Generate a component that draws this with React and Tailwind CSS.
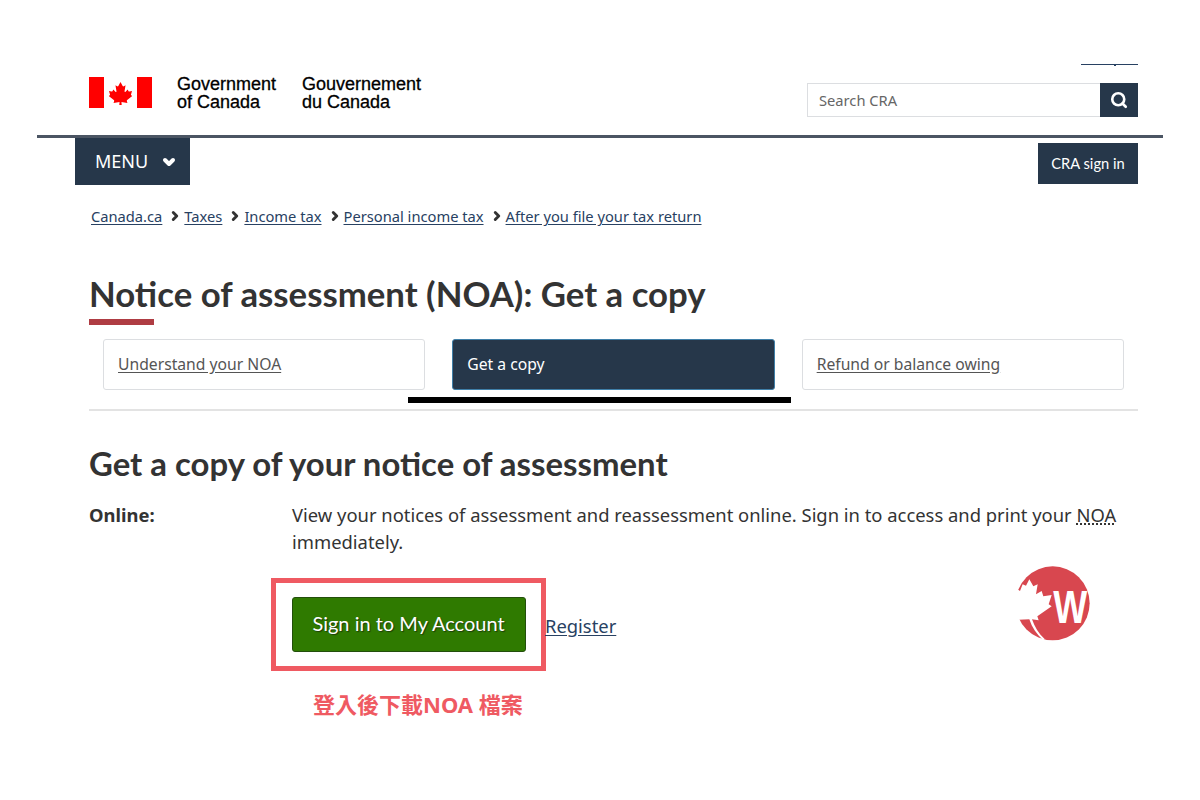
import React from 'react';
import { ChevronDown, ChevronRight, Search } from 'lucide-react';

const MAPLE = 'M50 4 L59 21 C60 23 62 23 64 22 L71 18 L67 42 C66 46 69 47 71 45 L80 35 L83 42 C84 44 85 44 87 44 L98 42 L94 55 C93 58 94 59 96 60 L99 62 L78 79 C76 81 76 82 77 85 L79 92 L54 88 L55 100 L45 100 L46 88 L21 92 L23 85 C24 82 24 81 22 79 L1 62 L4 60 C6 59 7 58 6 55 L2 42 L13 44 C15 44 16 44 17 42 L20 35 L29 45 C31 47 34 46 33 42 L29 18 L36 22 C38 23 40 23 41 21 Z';

const crumbs = ['Taxes', 'Income tax', 'Personal income tax', 'After you file your tax return'];

const Flag = () => (
  <svg width="64" height="31" viewBox="0 0 64 31" className="block">
    <rect x="0" y="0" width="15" height="31" fill="#ff0000" />
    <rect x="48" y="0" width="15" height="31" fill="#ff0000" />
    <svg x="19.5" y="4" width="24" height="24" viewBox="0 0 100 100">
      <path d={MAPLE} fill="#ff0000" />
    </svg>
  </svg>
);

const CwLogo = () => (
  <svg width="110" height="100" viewBox="0 0 330 300" className="block">
    <circle cx="158" cy="157" r="111" fill="#d8474f" />
    <path
      d="M88 85 L100 106 L113 100 L108 130 L125 120 L130 136 L155 132 L146 160 L155 166 L112 196 L116 208 L96 205 C104 228 116 248 134 264 L128 266 C110 250 96 230 88 205 L56 206 L30 206 L30 100 L60 120 L68 100 L78 104 Z"
      fill="#ffffff"
    />
    <text x="160" y="215" fontFamily="Liberation Sans, sans-serif" fontWeight="700" fontSize="140" fill="#ffffff" textLength="102" lengthAdjust="spacingAndGlyphs">W</text>
  </svg>
);

const Tab = ({ label, active }) => (
  active ? (
    <div className="flex-1 h-[51px] flex items-center px-[14px] pt-[1px] rounded-[3px] bg-[#26374a] border border-[#3f7fa8] text-white text-[15.7px]">
      {label}
    </div>
  ) : (
    <div className="flex-1 h-[51px] flex items-center px-[14px] pt-[1px] rounded-[3px] bg-white border border-[#dcdee1] text-[#555] text-[15.7px] underline underline-offset-2">
      {label}
    </div>
  )
);

export default function App() {
  return (
    <div className="w-[1200px] h-[800px] bg-white overflow-hidden px-[37px] pt-[60px] font-['Noto_Sans',sans-serif] text-[#333]">
      <header className="h-[75px] pl-[52px] pr-[25px] flex justify-between">
        <div className="flex items-start pt-[17px]">
          <Flag />
          <div className="ml-[24px] mt-[-2px] font-['Liberation_Sans',sans-serif] text-[18px] leading-[18px] text-black [-webkit-text-stroke:0.3px_black] w-[125px]">
            <div>Government</div>
            <div>of Canada</div>
          </div>
          <div className="mt-[-2px] font-['Liberation_Sans',sans-serif] text-[18px] leading-[18px] text-black [-webkit-text-stroke:0.3px_black]">
            <div>Gouvernement</div>
            <div>du Canada</div>
          </div>
        </div>
        <div className="flex flex-col items-end">
          {/* language link, only its underline survives in the screenshot */}
          <div className="relative mt-[4px] w-[57px] h-[1px] bg-[#284162]">
            <div className="absolute left-[33px] top-[1px] w-[2px] h-[1px] bg-[#284162]" />
          </div>
          <div className="mt-[18px] flex w-[331px] h-[34px]">
            <div className="flex-1 flex items-center px-[11px] border border-[#dcdee1] border-r-0 text-[#666] text-[14.7px]">Search CRA</div>
            <div className="w-[38px] bg-[#26374a] flex items-center justify-center">
              <Search size={18} strokeWidth={3.5} color="#fff" />
            </div>
          </div>
        </div>
      </header>

      <div className="h-[3px] bg-[#4b5563]" />

      <div className="flex justify-between pl-[38px] pr-[25px]">
        <div className="w-[115px] h-[47px] bg-[#26374a] text-white text-[18px] flex items-center pl-[20px]">
          MENU
          <ChevronDown size={16} strokeWidth={6} className="ml-[13px]" />
        </div>
        <div className="mt-[5px] w-[100px] h-[41px] bg-[#26374a] text-white text-[14.7px] flex items-center justify-center font-['Lato',sans-serif]">
          CRA sign in
        </div>
      </div>

      <main className="pl-[52px] pr-[25px]">
        <nav className="mt-[21px] pl-[2px] flex items-center text-[14.7px] leading-[20px] text-[#284162]">
          <span className="underline underline-offset-2">Canada.ca</span>
          {crumbs.map((c) => (
            <span key={c} className="flex items-center">
              <ChevronRight size={14} strokeWidth={5} color="#333" className="ml-[6px] mr-[2px]" />
              <span className="underline underline-offset-2">{c}</span>
            </span>
          ))}
        </nav>

        <h1 className="mt-[46px] text-[34.75px] leading-[44px] font-bold font-['Lato',sans-serif] text-[#333]">
          Notice of assessment (NOA): Get a copy
        </h1>
        <div className="mt-[3px] w-[65px] h-[6px] bg-[#af3c43]" />

        <div className="relative mt-[14px] h-[72px] border-b-2 border-[#e3e3e3]">
          <div className="flex gap-[27px] px-[14px]">
            <Tab label="Understand your NOA" />
            <Tab label="Get a copy" active />
            <Tab label="Refund or balance owing" />
          </div>
          <div className="absolute left-[319px] top-[58px] w-[383px] h-[6px] bg-black" />
        </div>

        <h2 className="mt-[31px] text-[32.9px] leading-[44px] font-bold font-['Lato',sans-serif] text-[#333]">
          Get a copy of your notice of assessment
        </h2>

        <div className="mt-[15px] flex text-[18.4px] leading-[27px]">
          <div className="w-[203px] font-bold">Online:</div>
          <div className="flex-1">
            <p>
              View your notices of assessment and reassessment online. Sign in to access and print your{' '}
              <span className="underline decoration-dotted underline-offset-2">NOA</span> immediately.
            </p>
          </div>
        </div>

        <div className="relative mt-[23px] pl-[182px] flex">
          <div className="w-[275px] h-[93px] border-[5px] border-[#ef5a62] flex items-center justify-center">
            <div className="w-[234px] h-[55px] pb-[4px] rounded-[3px] bg-[#2f7a00] border border-[#234f0c] text-white text-[20px] flex items-center justify-center font-['Lato',sans-serif] [text-shadow:1px_1px_1px_#1c3d08]">
              Sign in to My Account
            </div>
          </div>
          <div className="ml-[-1px] mt-[35px] text-[18.4px] leading-[26px] text-[#284162] underline underline-offset-2">Register</div>
          <div className="absolute left-[911px] top-[-27px]">
            <CwLogo />
          </div>
        </div>

        <div className="mt-[18px] ml-[224px] text-[22px] leading-[30px] font-bold text-[#ef5a62] font-['Noto_Sans','Noto_Sans_CJK_TC',sans-serif]">
          登入後下載NOA 檔案
        </div>
      </main>
    </div>
  );
}
